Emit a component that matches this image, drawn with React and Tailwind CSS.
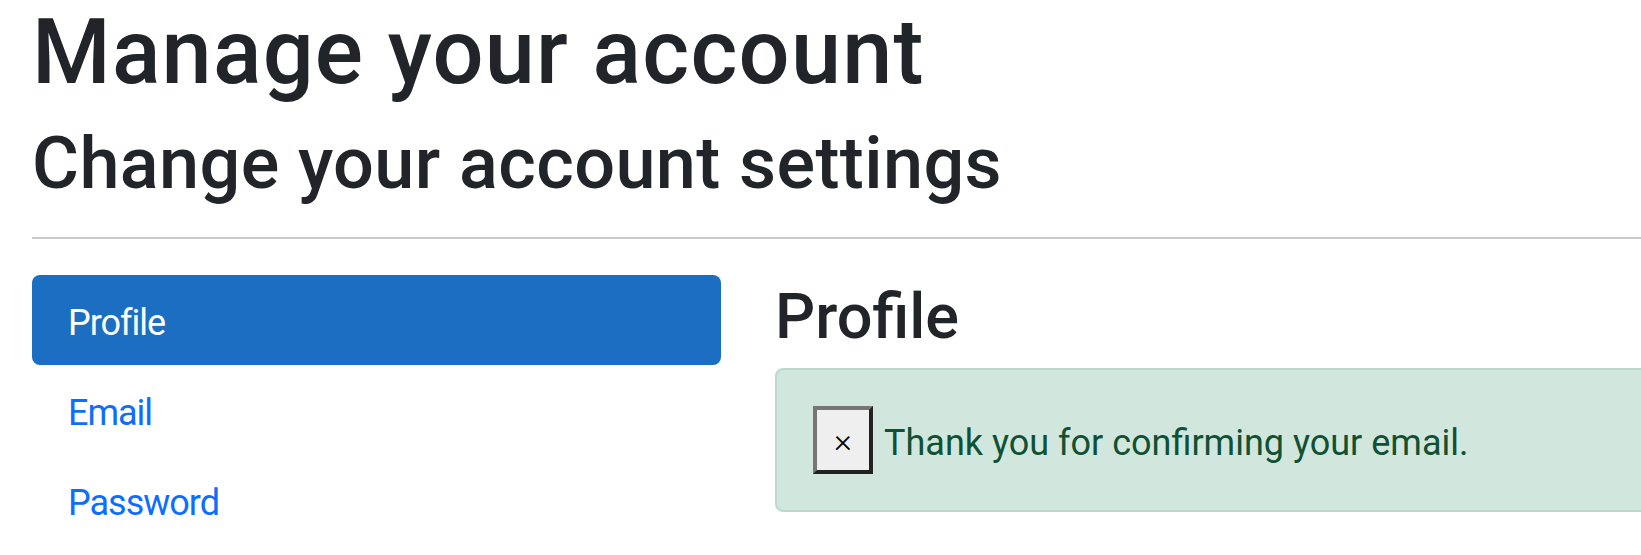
export default function App() {
  const links = [
    { name: "Profile", active: true },
    { name: "Email" },
    { name: "Password" },
  ];

  return (
    <div className="h-[555px] w-full overflow-hidden bg-white text-[#212529] font-['Roboto','Liberation_Sans',sans-serif]">
      <div className="w-[2400px] pl-[32px]">
        <h1 className="text-[90px] leading-[106px] font-medium tracking-[1.2px] mb-[15px]">Manage your account</h1>
        <h2 className="text-[72px] leading-[86px] font-medium tracking-[0.4px]">Change your account settings</h2>
        <hr className="mt-[30px] mb-[36px] border-0 h-[2px] bg-[#c8c9ca]" />

        <div className="flex gap-[54px]">
          <ul className="w-[689px] shrink-0 flex flex-col">
            {links.map(link => (
              <li key={link.name}>
                <a
                  href="#"
                  className={`block pl-[36px] pt-[21px] pb-[15px] text-[36px] leading-[54px] tracking-[-1px] rounded-[8px] ${
                    link.active ? "bg-[#1b6ec2] text-white" : "text-[#0d6efd]"
                  }`}
                >
                  {link.name}
                </a>
              </li>
            ))}
          </ul>

          <div className="flex-1">
            <h3 className="text-[63px] leading-[75px] pt-[4px] mb-[14px] font-medium">Profile</h3>
            <div className="flex items-start gap-[11px] p-[36px] border-[2px] border-[#badbcc] bg-[#d1e7dd] rounded-[8px] text-[#0f5132] text-[36px] leading-[54px]">
              <button
                type="button"
                aria-label="Close"
                className="w-[60px] h-[68px] shrink-0 flex items-center justify-center bg-[#efefef] border-[4px] border-t-[#767676] border-l-[#767676] border-b-[#222222] border-r-[#222222] text-black text-[34px] leading-[54px] font-light"
              >
                <span aria-hidden="true">×</span>
              </button>
              <span className="mt-[10px]">Thank you for confirming your email.</span>
            </div>
          </div>
        </div>
      </div>
    </div>
  );
}
